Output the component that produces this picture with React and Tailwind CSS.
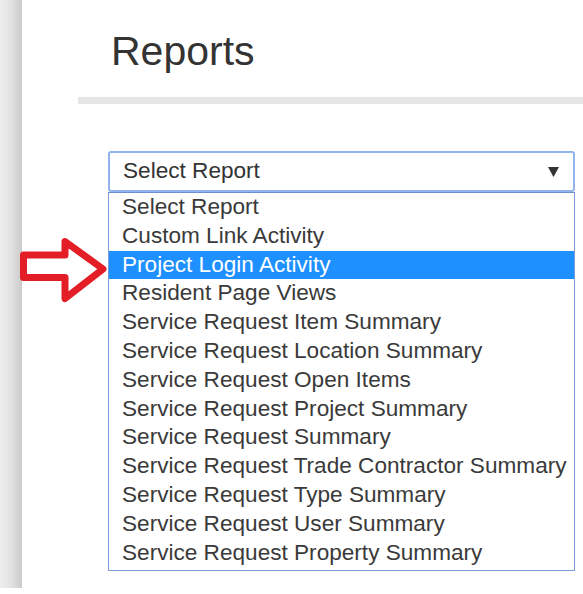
const reports = [
  "Select Report",
  "Custom Link Activity",
  "Project Login Activity",
  "Resident Page Views",
  "Service Request Item Summary",
  "Service Request Location Summary",
  "Service Request Open Items",
  "Service Request Project Summary",
  "Service Request Summary",
  "Service Request Trade Contractor Summary",
  "Service Request Type Summary",
  "Service Request User Summary",
  "Service Request Property Summary",
]

export default function App() {
  const selected = 2
  return (
    <div className="relative w-[583px] h-[594px] bg-white overflow-hidden font-['Liberation_Sans',Arial,sans-serif] text-[#333]">
      <div className="flex">
        <div className="w-[22px] h-[588px] shrink-0 bg-gradient-to-r from-[#eeeeee] via-[#e2e2e2] to-[#cbcbcb]" />

        <main className="flex-1 flex flex-col">
          <h1 className="ml-[89px] mt-[31px] text-[41px] leading-none font-normal text-[#333]">Reports</h1>

          <div className="ml-[56px] mt-[25px] h-[7px] bg-[#e6e6e6]" />

          <div className="ml-[86px] mt-[47px] w-[467px]">
            <div className="h-[41px] flex items-center justify-between pl-[13px] pr-[14px] border-2 border-[#93b4ea] rounded-[3px] bg-white">
              <span className="text-[22.6px] leading-none">Select Report</span>
              <svg width="11" height="10" viewBox="0 0 11 10">
                <polygon points="0,0 11,0 5.5,10" fill="#333" />
              </svg>
            </div>
            <ul className="border border-[#7b9cd6] border-t-[#6d8fcf] bg-white pb-[3px]">
              {reports.map((r, i) => (
                <li
                  key={r}
                  className={
                    "h-[28.8px] pl-[13px] text-[22.6px] leading-[28.8px] whitespace-nowrap " +
                    (i === selected ? "bg-[#1e90ff] text-white" : "text-[#3a3a3a]")
                  }
                >
                  {r}
                </li>
              ))}
            </ul>
          </div>
        </main>
      </div>

      <svg className="absolute left-0 top-[230px]" width="115" height="80" viewBox="0 230 115 80">
        <path
          d="M23.5 255 L65 255 L65 241.5 L103 269 L65 298.5 L65 277.5 L23.5 277.5 Z"
          fill="white"
          stroke="#e41e26"
          strokeWidth="7"
          strokeLinejoin="round"
        />
      </svg>
    </div>
  )
}
